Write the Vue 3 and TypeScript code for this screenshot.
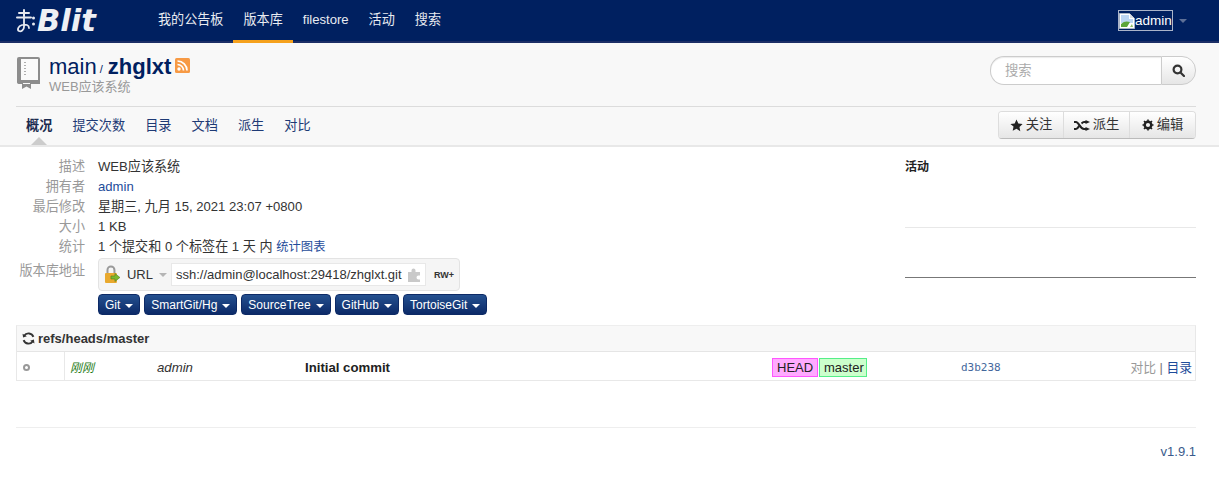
<script setup lang="ts">
const navItems = [
  { label: '我的公告板', active: false },
  { label: '版本库', active: true },
  { label: 'filestore', active: false },
  { label: '活动', active: false },
  { label: '搜索', active: false },
]
const tabs = ['概况', '提交次数', '目录', '文档', '派生', '对比']
const cloneButtons = ['Git', 'SmartGit/Hg', 'SourceTree', 'GitHub', 'TortoiseGit']
</script>

<template>
  <div class="page">
    <nav class="navbar">
      <div class="brand">
        <svg class="brand-mark" width="20" height="24" viewBox="0 0 20 24" fill="none" stroke="#e6e9f0" stroke-width="2" stroke-linecap="round">
          <path d="M8 1v6M3 4h10M1 8.500h14" />
          <path d="M8 9v9c0 3-3 5-5 4s-1-5 3-6 7 0 7 3" stroke-width="1.800" />
          <circle cx="17.500" cy="9" r="1.500" fill="#e6e9f0" stroke="none" />
          <circle cx="17.500" cy="15" r="1.500" fill="#e6e9f0" stroke="none" />
        </svg>
        <span class="brand-text">Blit</span>
      </div>
      <ul class="nav-list">
        <li v-for="item in navItems" :key="item.label" class="nav-item" :class="{ active: item.active }">{{ item.label }}</li>
      </ul>
      <div class="nav-user">
        <span class="avatar">
          <svg width="16" height="16" viewBox="0 0 16 16">
            <path d="M.5.5h10l5 5v10H.5z" fill="#fff" stroke="#a9b4c4" stroke-width="1" />
            <path d="M2 2h8v4h4v4H2z" fill="#bcd6f2" />
            <path d="M2 14v-3c3-3 6-3 9-2l-3 5z" fill="#5da53a" />
            <path d="M13 11l1 3h-3z" fill="#8cbc62" />
            <path d="M11 1v4h4z" fill="#d8dde5" />
          </svg>
          <span>admin</span>
        </span>
        <span class="caret dim"></span>
      </div>
    </nav>

    <header class="repo-header">
      <div class="title-row">
        <div class="title-left">
          <svg class="book" width="25" height="33" viewBox="0 0 25 33">
            <path d="M3 1h19a2 2 0 0 1 2 2v25H3a2 2 0 0 1-2-2V3a2 2 0 0 1 2-2z" fill="#8d8d8d" />
            <rect x="5" y="3" width="17" height="21" fill="#fafafa" />
            <path d="M9 6v1M9 9v1M9 12v1M9 15v1M9 18v1" stroke="#8d8d8d" stroke-width="1.4" />
            <path d="M1 26a3 3 0 0 1 3-3h1v3h19v2H4a3 3 0 0 1-3-2z" fill="#8d8d8d" />
            <path d="M6 26h9v7l-4.500-2.500L6 33z" fill="#8d8d8d" />
            <path d="M7 27h7v1H7z" fill="#fafafa" />
          </svg>
          <div class="title-text">
            <div class="title">
              <span class="project">main</span><span class="slash">/</span><span class="repo">zhglxt</span>
              <svg class="rss" width="15" height="15" viewBox="0 0 15 15">
                <rect width="15" height="15" rx="1.500" fill="#f79a45" />
                <circle cx="4" cy="11" r="1.700" fill="#fff" />
                <path d="M2.500 6.500a6 6 0 0 1 6 6M2.500 3a9.500 9.500 0 0 1 9.500 9.500" fill="none" stroke="#fff" stroke-width="1.700" />
              </svg>
            </div>
            <div class="subtitle">WEB应该系统</div>
          </div>
        </div>
        <div class="search">
          <input class="search-input" type="text" placeholder="搜索" />
          <button class="search-btn" type="button" aria-label="搜索">
            <svg width="13" height="13" viewBox="0 0 13 13" fill="none" stroke="#333" stroke-width="2.200">
              <circle cx="5.500" cy="5.500" r="3.900" />
              <path d="M8.500 8.500l3.500 3.500" stroke-linecap="round" />
            </svg>
          </button>
        </div>
      </div>
      <div class="tab-row">
        <ul class="tabs">
          <li v-for="(tab, i) in tabs" :key="tab" class="tab" :class="{ current: i === 0 }">{{ tab }}</li>
        </ul>
        <div class="btn-group">
          <button class="group-btn" type="button">
            <svg width="13" height="13" viewBox="0 0 24 24" fill="#222"><path d="M12 1l3.400 7.300 7.900 1-5.800 5.500 1.500 7.900L12 18l-7 3.700 1.500-7.900L.7 9.300l7.900-1z" /></svg>
            关注
          </button>
          <button class="group-btn" type="button">
            <svg width="16" height="11" viewBox="0 0 16 11" fill="none" stroke="#222" stroke-width="2">
              <path d="M0 2h2c3 0 4 7 8 7h2M5 6c-1 2-1.500 3-3 3H0M7.500 3.500C8.500 2.500 9 2 10 2h2" />
              <path d="M11.500 0l4.500 2-4.500 2zM11.500 7l4.500 2-4.500 2z" fill="#222" stroke="none" />
            </svg>
            派生
          </button>
          <button class="group-btn" type="button">
            <svg width="12" height="12" viewBox="0 0 12 12">
              <circle cx="6" cy="6" r="3.300" fill="none" stroke="#222" stroke-width="2.400" />
              <path d="M6 .5v2M6 9.500v2M.5 6h2M9.500 6h2M2 2l1.500 1.500M8.500 8.500L10 10M2 10l1.500-1.500M8.500 3.500L10 2" stroke="#222" stroke-width="1.600" />
            </svg>
            编辑
          </button>
        </div>
      </div>
    </header>

    <main class="content">
      <section class="summary">
        <div class="props">
          <div class="prop-row"><span class="prop-label">描述</span><span class="prop-value">WEB应该系统</span></div>
          <div class="prop-row"><span class="prop-label">拥有者</span><span class="prop-value link">admin</span></div>
          <div class="prop-row"><span class="prop-label">最后修改</span><span class="prop-value">星期三, 九月 15, 2021 23:07 +0800</span></div>
          <div class="prop-row"><span class="prop-label">大小</span><span class="prop-value">1 KB</span></div>
          <div class="prop-row"><span class="prop-label">统计</span><span class="prop-value">1 个提交和 0 个标签在 1 天 内 <span class="link small-link">统计图表</span></span></div>
          <div class="prop-row url-row">
            <span class="prop-label url-label">版本库地址</span>
            <div class="url-block">
              <div class="url-box">
                <svg class="lock" width="17" height="19" viewBox="0 0 17 19">
                  <path d="M3.500 8V5a3.500 3.500 0 0 1 7 0v3" fill="none" stroke="#9a9a9a" stroke-width="2" />
                  <rect x="1" y="8" width="12" height="10" rx="1" fill="#e9a92e" />
                  <path d="M7 11h4V8.500l5 4-5 4V14H7z" fill="#7cb82f" stroke="#4f7f1c" stroke-width=".6" />
                </svg>
                <span class="url-type">URL</span>
                <span class="caret light"></span>
                <span class="url-field">
                  <span>ssh://admin@localhost:29418/zhglxt.git</span>
                  <svg width="14" height="14" viewBox="0 0 14 14" fill="#c9c9c9"><path d="M1 4h3.500V2.500a2 2 0 0 1 4 0V4H13v3.500h-1.500a2 2 0 0 0 0 4H13V14H1z" /></svg>
                </span>
                <span class="perm">RW+</span>
              </div>
              <div class="clone-buttons">
                <button v-for="name in cloneButtons" :key="name" class="clone-btn" type="button">{{ name }}<span class="caret white"></span></button>
              </div>
            </div>
          </div>
        </div>
        <aside class="activity">
          <div class="activity-title">活动</div>
          <div class="chart-line pale"></div>
          <div class="chart-line dark"></div>
        </aside>
      </section>

      <section class="log">
        <div class="log-head">
          <svg width="13" height="13" viewBox="0 0 24 24" fill="none" stroke="#333" stroke-width="3.600">
            <path d="M21 9A9.500 9.500 0 0 0 4 7" />
            <path d="M3 15a9.500 9.500 0 0 0 17 2" />
            <path d="M1 3l1 7 7-2zM23 21l-1-7-7 2z" fill="#333" stroke="none" />
          </svg>
          refs/heads/master
        </div>
        <div class="log-row">
          <span class="cell-icon"><span class="dot"></span></span>
          <span class="cell-when">刚刚</span>
          <span class="cell-author">admin</span>
          <span class="cell-msg">Initial commit</span>
          <span class="cell-refs"><span class="ref head">HEAD</span><span class="ref branch">master</span></span>
          <span class="cell-hash">d3b238</span>
          <span class="cell-links"><span class="muted">对比</span> | <span class="link">目录</span></span>
        </div>
      </section>

      <footer class="footer">v1.9.1</footer>
    </main>
  </div>
</template>

<style>
html, body { margin: 0; background: #fff; }
</style>

<style scoped>
.page {
  width: 1219px;
  height: 495px;
  overflow: hidden;
  font-family: "Liberation Sans", "Noto Sans CJK SC", sans-serif;
  font-size: 13.1px;
  line-height: 20px;
  color: #333;
}
ul { list-style: none; margin: 0; padding: 0; }
button { font: inherit; cursor: pointer; }

.navbar {
  height: 41px;
  border-bottom: 2px solid #1c2f66;
  background: #002060;
  display: flex;
  align-items: stretch;
  padding: 0 32px 0 16px;
}
.brand { width: 132px; display: flex; align-items: center; gap: 1px; }
.brand-text {
  font-family: "DejaVu Sans", sans-serif;
  font-size: 30.500px;
  font-weight: 700;
  font-style: italic;
  color: #eef0f4;
  line-height: 30px;
}
.nav-list { display: flex; flex: 1; height: 43px; }
.nav-item {
  padding: 0 10px;
  font-size: 13.100px;
  line-height: 39px;
  color: #e8ebf1;
  box-sizing: border-box;
  height: 43px;
}
.nav-item.active { border-bottom: 3px solid #f5a11d; }
.nav-user { display: flex; align-items: center; gap: 6px; }
.avatar {
  display: flex;
  align-items: center;
  border: 1px solid #aab4c9;
  height: 21px;
  width: 55px;
  box-sizing: border-box;
  color: #fff;
  font-size: 13.500px;
  overflow: hidden;
}
.caret {
  display: inline-block;
  width: 0;
  height: 0;
  border-left: 4px solid transparent;
  border-right: 4px solid transparent;
  border-top: 4px solid #fff;
}
.caret.dim { border-top-color: #5d6f96; }
.caret.light { border-top-color: #b5b5b5; }
.caret.white { margin-left: 5px; vertical-align: 1px; }

.repo-header {
  background: #f8f8f8;
  border-bottom: 2px solid #e8e8e8;
  padding: 0 23px 0 16px;
  height: 102px;
}
.title-row {
  height: 64px;
  box-sizing: border-box;
  border-bottom: 1px solid #dcdcdc;
  display: flex;
  justify-content: space-between;
  padding-top: 14px;
}
.title-left { display: flex; gap: 8px; }
.book { margin-top: -1px; }
.title { display: flex; align-items: center; height: 20px; color: #002060; }
.project { font-size: 22px; line-height: 20px; }
.slash { font-size: 11px; margin: 3px 5px 0 3px; }
.repo { font-size: 22px; font-weight: 700; }
.rss { margin: -4px 0 0 4px; }
.subtitle { font-size: 13px; color: #999; line-height: 18px; margin-top: 1px; }
.search { display: flex; height: 29px; margin-top: -1px; }
.search-input {
  width: 171px;
  box-sizing: border-box;
  height: 29px;
  border: 1px solid #ccc;
  border-right: none;
  border-radius: 14px 0 0 14px;
  padding: 0 14px;
  background: #fff;
  font: inherit;
  font-size: 13.300px;
  box-shadow: inset 0 1px 1px rgba(0, 0, 0, .08);
  outline: none;
}
.search-input::placeholder { color: #aaa; }
.search-btn {
  width: 35px;
  height: 29px;
  border: 1px solid #ccc;
  border-radius: 0 14px 14px 0;
  background: linear-gradient(#fff, #e6e6e6);
  padding: 0;
  display: flex;
  align-items: center;
  justify-content: center;
}
.tab-row { display: flex; justify-content: space-between; height: 38px; }
.tabs { display: flex; }
.tab {
  position: relative;
  padding: 0 10px;
  line-height: 38px;
  color: #1e3a75;
  font-size: 13.200px;
}
.tab.current { font-weight: 700; color: #1b2b4f; }
.tab.current::after {
  content: "";
  position: absolute;
  left: 50%;
  bottom: 0;
  margin-left: -8px;
  border-left: 8px solid transparent;
  border-right: 8px solid transparent;
  border-bottom: 8px solid #ccc;
}
.btn-group {
  display: flex;
  height: 28px;
  margin-top: 4px;
  border: 1px solid #ddd;
  border-bottom-color: #bbb;
  border-radius: 4px;
  box-sizing: border-box;
  overflow: hidden;
}
.group-btn {
  display: flex;
  align-items: center;
  justify-content: center;
  gap: 3px;
  width: 66px;
  padding: 0;
  border: none;
  border-left: 1px solid #ddd;
  background: linear-gradient(#fff, #e6e6e6);
  color: #333;
  font-size: 13.300px;
}
.group-btn:first-child { border-left: none; width: 64px; }

.content { padding: 10px 23px 0 16px; }
.summary { display: flex; height: 168px; }
.props { width: 889px; }
.prop-row { display: flex; height: 20px; }
.prop-label { width: 69px; text-align: right; color: #999; flex: none; margin-right: 13px; }
.url-label { margin-top: 3px; }
.prop-value { color: #333; }
.link { color: #1e4c9a; }
.small-link { font-size: 12.300px; }
.url-row { margin-top: 1px; height: auto; }
.url-block { display: flex; flex-direction: column; gap: 3px; }
.url-box {
  display: flex;
  align-items: center;
  box-sizing: border-box;
  width: 362px;
  height: 33px;
  border: 1px solid #e3e3e3;
  border-radius: 4px;
  background: #f5f5f5;
  padding: 0 5px 0 5px;
}
.lock { margin-right: 6px; }
.url-type { font-size: 13px; margin-right: 6px; color: #333; }
.url-box .caret { margin-right: 4px; }
.url-field {
  display: flex;
  align-items: center;
  justify-content: space-between;
  background: #fff;
  border: 1px solid #e8e8e8;
  height: 23px;
  width: 256px;
  box-sizing: border-box;
  padding: 0 4px;
  font-size: 13px;
  white-space: nowrap;
}
.perm { font-size: 9px; font-weight: 700; color: #333; margin-left: 8px; }
.clone-buttons { display: flex; gap: 4px; }
.clone-btn {
  height: 21px;
  padding: 0 6px;
  border: 1px solid #0d2a66;
  border-radius: 4px;
  background: linear-gradient(#24508f, #0c2a68);
  color: #fff;
  font-size: 12px;
  line-height: 18px;
  white-space: nowrap;
}
.activity { width: 291px; flex: none; }
.activity-title { font-weight: 700; font-size: 12px; color: #222; }
.chart-line { height: 1px; }
.chart-line.pale { background: #e8e8e8; margin-top: 50px; }
.chart-line.dark { background: #777; margin-top: 49px; }

.log { border: 1px solid #e8e8e8; border-top-color: #eee; }
.log-head {
  height: 26px;
  box-sizing: border-box;
  background: #f8f8f8;
  border-bottom: 1px solid #e5e5e5;
  display: flex;
  align-items: center;
  gap: 3px;
  padding-left: 5px;
  font-weight: 700;
  font-size: 13px;
  color: #333;
}
.log-row { display: flex; align-items: center; height: 28px; font-size: 13.200px; }
.log-row > span { margin-top: 3px; }
.log-row > .cell-icon {
  margin-top: 0;
  padding-top: 2px;
  align-self: stretch;
  width: 48px;
  border-right: 1px solid #e8e8e8;
  display: flex;
  align-items: center;
  padding-left: 6px;
  box-sizing: border-box;
}
.dot { width: 3px; height: 3px; border: 2px solid #999; border-radius: 50%; }
.cell-when { width: 87px; padding-left: 5px; box-sizing: border-box; font-style: italic; color: #1a7a12; font-size: 12px; }
.cell-author { width: 153px; padding-left: 5px; box-sizing: border-box; font-style: italic; color: #333; }
.cell-msg { width: 467px; font-weight: 700; color: #222; }
.cell-refs { width: 189px; display: flex; gap: 1px; }
.ref { height: 19px; line-height: 17px; box-sizing: border-box; border: 1px solid; padding: 0 4px; font-size: 13px; color: #222; }
.ref.head { background: #ffaaff; border-color: #ff55ff; width: 46px; }
.ref.branch { background: #ccffcc; border-color: #55ee88; width: 48px; }
.cell-hash { width: 104px; font-family: "DejaVu Sans Mono", monospace; font-size: 11px; color: #44679c; }
.cell-links { flex: 1; text-align: right; padding-right: 3px; color: #777; font-size: 12.800px; }
.muted { color: #999; }

.footer {
  margin-top: 46px;
  border-top: 1px solid #eee;
  text-align: right;
  color: #3a5a8c;
  font-size: 13px;
  padding-top: 14px;
}
</style>
